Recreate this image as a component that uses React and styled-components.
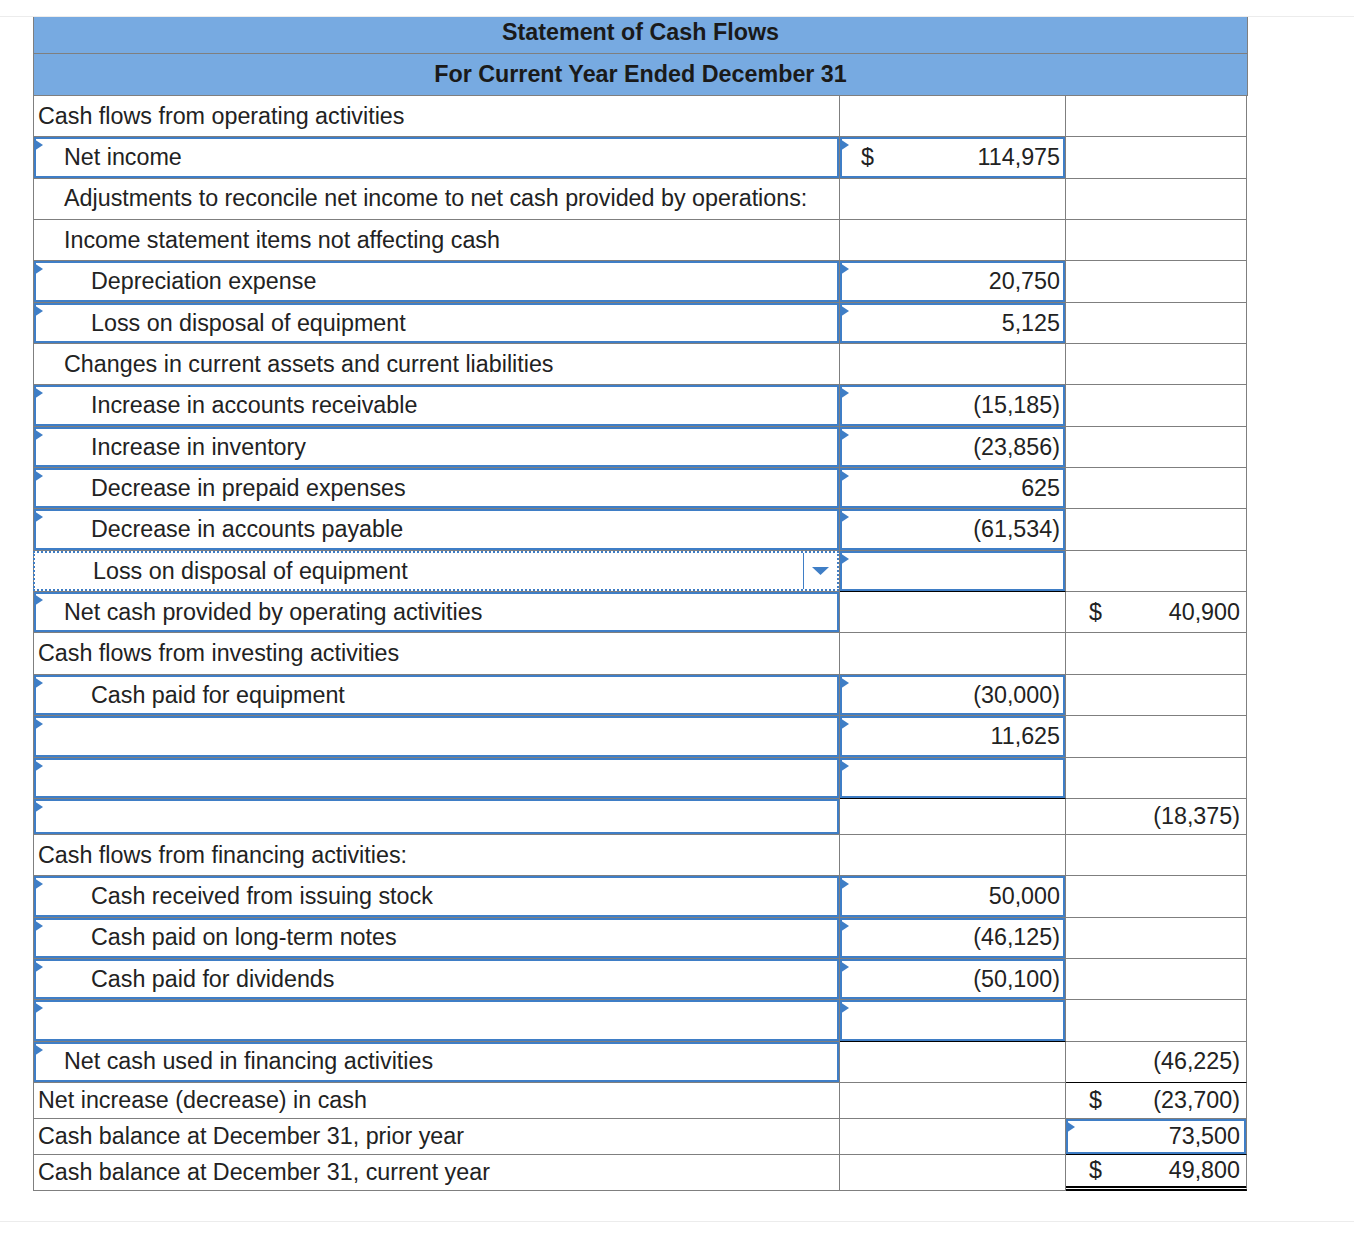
import React from 'react'
import styled, { createGlobalStyle } from 'styled-components'

const BLUE = '#3f7ec6'
const GRID = '#7f7f7f'

const GlobalStyle = createGlobalStyle`
  body {
    margin: 0;
    background: #fff;
    color: #222;
    font-family: "Liberation Sans", Arial, Helvetica, sans-serif;
  }
`

const Page = styled.div`
  margin-top: 16px;
  border-top: 1px solid #ececec;
  border-bottom: 1px solid #ececec;
  padding: 0 0 30px 33px;
`
const Sheet = styled.div`
  width: 1214px;
  border-left: 1px solid ${GRID};
  font-size: 23.3px;
  line-height: 1.15;
`
const Title = styled.div`
  height: ${p => p.$h}px;
  box-sizing: border-box;
  background: #77aae1;
  border-right: 1px solid ${GRID};
  border-bottom: 1px solid ${GRID};
  display: flex;
  justify-content: center;
  align-items: ${p => (p.$top ? 'flex-start' : 'center')};
  padding-top: ${p => (p.$top ? 2 : 0)}px;
  font-weight: bold;
  color: #1a1a1a;
`
const Row = styled.div`
  display: grid;
  grid-template-columns: 806px 226px 181px;
  height: ${p => p.$h}px;
`
const rules = {
  single: '1px solid #000',
  double: '5px double #000',
}
const Cell = styled.div`
  position: relative;
  box-sizing: border-box;
  min-width: 0;
  display: flex;
  align-items: center;
  border-right: 1px solid ${GRID};
  border-bottom: ${p => rules[p.$rule] || `1px solid ${GRID}`};
`
const Field = styled.div`
  position: relative;
  flex: 1;
  align-self: stretch;
  box-sizing: border-box;
  display: flex;
  align-items: center;
  min-width: 0;
  border: 2px solid ${BLUE};

  &::before {
    content: '';
    position: absolute;
    left: -2px;
    top: 0;
    border-left: 9px solid ${BLUE};
    border-top: 6px solid transparent;
    border-bottom: 6px solid transparent;
  }
`
const Label = styled.span`
  padding-left: ${p => p.$x}px;
  white-space: nowrap;
`
const Amount = styled.div`
  flex: 1;
  display: flex;
  justify-content: space-between;
  padding: 0 ${p => p.$pr}px 0 ${p => p.$pl}px;
`
const SelectBox = styled.div`
  flex: 1;
  align-self: stretch;
  box-sizing: border-box;
  display: flex;
  align-items: center;
  margin-left: -1px;
  border: 2px dotted ${BLUE};
`
const SelectText = styled.span`
  flex: 1;
  padding-left: 58px;
  white-space: nowrap;
`
const Divider = styled.div`
  width: 1px;
  align-self: stretch;
  background: ${BLUE};
`
const ArrowBox = styled.div`
  width: 33px;
  display: flex;
  justify-content: center;
  align-items: center;
`

const INDENT = [4, 30, 57]

const ROWS = [
  { text: 'Cash flows from operating activities', level: 0 },
  { text: 'Net income', level: 1, input: true, mid: { input: true, dollar: true, value: '114,975' } },
  { text: 'Adjustments to reconcile net income to net cash provided by operations:', level: 1 },
  { text: 'Income statement items not affecting cash', level: 1 },
  { text: 'Depreciation expense', level: 2, input: true, mid: { input: true, value: '20,750' } },
  { text: 'Loss on disposal of equipment', level: 2, input: true, mid: { input: true, value: '5,125' } },
  { text: 'Changes in current assets and current liabilities', level: 1 },
  { text: 'Increase in accounts receivable', level: 2, input: true, mid: { input: true, value: '(15,185)' } },
  { text: 'Increase in inventory', level: 2, input: true, mid: { input: true, value: '(23,856)' } },
  { text: 'Decrease in prepaid expenses', level: 2, input: true, mid: { input: true, value: '625' } },
  { text: 'Decrease in accounts payable', level: 2, input: true, mid: { input: true, value: '(61,534)' } },
  { text: 'Loss on disposal of equipment', select: true, mid: { input: true, rule: 'single' } },
  { text: 'Net cash provided by operating activities', level: 1, input: true, right: { dollar: true, value: '40,900' } },
  { text: 'Cash flows from investing activities', level: 0 },
  { text: 'Cash paid for equipment', level: 2, input: true, mid: { input: true, value: '(30,000)' } },
  { text: '', level: 2, input: true, mid: { input: true, value: '11,625' } },
  { text: '', level: 2, input: true, mid: { input: true, rule: 'single' } },
  { text: '', level: 1, input: true, h: 36, right: { value: '(18,375)' } },
  { text: 'Cash flows from financing activities:', level: 0 },
  { text: 'Cash received from issuing stock', level: 2, input: true, mid: { input: true, value: '50,000' } },
  { text: 'Cash paid on long-term notes', level: 2, input: true, mid: { input: true, value: '(46,125)' } },
  { text: 'Cash paid for dividends', level: 2, input: true, mid: { input: true, value: '(50,100)' } },
  { text: '', level: 2, input: true, mid: { input: true, rule: 'single' } },
  { text: 'Net cash used in financing activities', level: 1, input: true, right: { value: '(46,225)', rule: 'single' } },
  { text: 'Net increase (decrease) in cash', level: 0, h: 36, right: { dollar: true, value: '(23,700)' } },
  { text: 'Cash balance at December 31, prior year', level: 0, h: 36, right: { input: true, value: '73,500', rule: 'single' } },
  { text: 'Cash balance at December 31, current year', level: 0, h: 36, right: { dollar: true, value: '49,800', rule: 'double' } },
]

function DropArrow() {
  return (
    <svg width="17" height="8" viewBox="0 0 17 8">
      <polygon points="0,0 17,0 8.5,8" fill={BLUE} />
    </svg>
  )
}

function LabelCell({ row }) {
  if (row.select) {
    return (
      <Cell>
        <SelectBox>
          <SelectText>{row.text}</SelectText>
          <Divider />
          <ArrowBox><DropArrow /></ArrowBox>
        </SelectBox>
      </Cell>
    )
  }
  const x = INDENT[row.level]
  if (row.input) {
    return (
      <Cell>
        <Field><Label $x={x - 2}>{row.text}</Label></Field>
      </Cell>
    )
  }
  return (
    <Cell><Label $x={x}>{row.text}</Label></Cell>
  )
}

function AmountCell({ data = {}, col }) {
  const { input, dollar, value, rule } = data
  const inset = input ? 2 : 0
  const body = (
    <Amount $pl={(col === 2 ? 21 : 23) - inset} $pr={(col === 2 ? 5 : 6) - inset}>
      <span>{dollar ? '$' : ''}</span>
      <span>{value}</span>
    </Amount>
  )
  return <Cell $rule={rule}>{input ? <Field>{body}</Field> : body}</Cell>
}

export default function App() {
  return (
    <>
      <GlobalStyle />
      <Page>
        <Sheet>
          <Title $h={37} $top>Statement of Cash Flows</Title>
          <Title $h={42}>For Current Year Ended December 31</Title>
          {ROWS.map((row, i) => (
            <Row key={i} $h={row.h || 41.35}>
              <LabelCell row={row} />
              <AmountCell data={row.mid} col={2} />
              <AmountCell data={row.right} col={3} />
            </Row>
          ))}
        </Sheet>
      </Page>
    </>
  )
}
